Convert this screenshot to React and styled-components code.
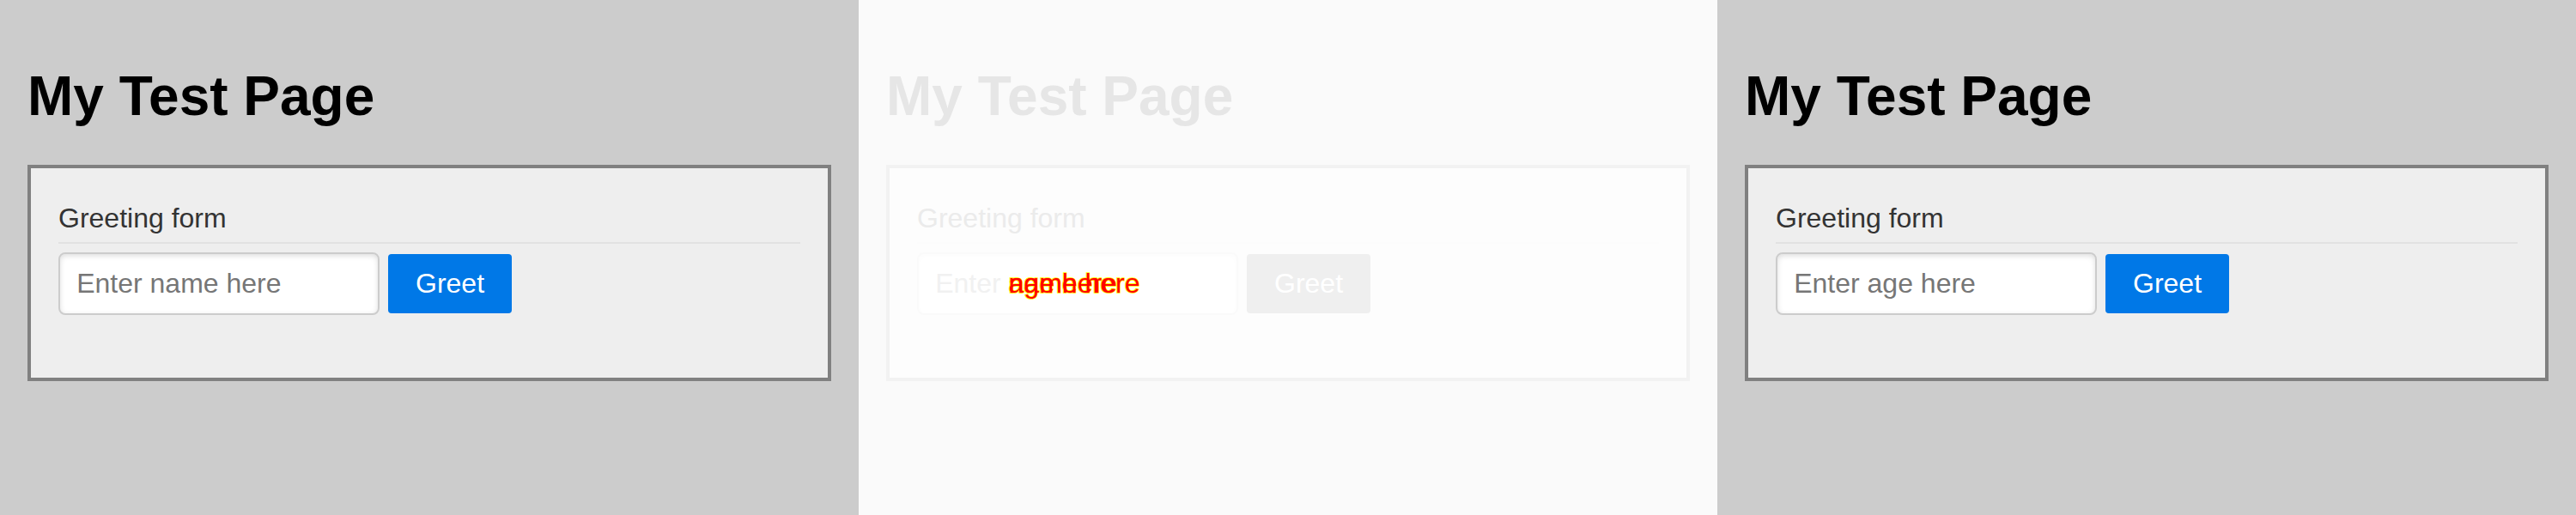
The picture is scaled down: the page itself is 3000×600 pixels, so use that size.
import React from "react";
import styled, { createGlobalStyle } from "styled-components";

const GlobalStyle = createGlobalStyle`
  html, body {
    margin: 0;
    padding: 0;
    background: #fff;
  }
  body {
    font-family: "Liberation Sans", Arial, sans-serif;
  }
`;

// normal page colours, and the same page washed out as a diff backdrop
const palettes = {
  normal: {
    page: "#cccccc",
    heading: "#000000",
    boxBorder: "#808080",
    boxBg: "#eeeeee",
    legend: "#333333",
    rule: "#e2e2e2",
    inputBg: "#ffffff",
    inputBorder: "#cccccc",
    inputShadow: "#dddddd",
    placeholder: "#767676",
    button: "#0078e7",
    buttonText: "#ffffff",
  },
  diff: {
    page: "#fafafa",
    heading: "#e6e6e6",
    boxBorder: "#f2f2f2",
    boxBg: "#fdfdfd",
    legend: "#ebebeb",
    rule: "#fcfcfc",
    inputBg: "#ffffff",
    inputBorder: "#fafafa",
    inputShadow: "#fcfcfc",
    placeholder: "#f1f1f1",
    button: "#efefef",
    buttonText: "#ffffff",
  },
};

const Screen = styled.div`
  display: flex;
  width: 3000px;
  height: 600px;
`;

const Panel = styled.section`
  width: 1000px;
  height: 600px;
  box-sizing: border-box;
  padding: 32px 32px 0;
  background: ${(p) => palettes[p.$variant].page};
  display: flow-root;
`;

const Title = styled.h1`
  margin: 43px 0;
  font-size: 64px;
  font-weight: 700;
  line-height: normal;
  color: ${(p) => palettes[p.$variant].heading};
`;

const FormBox = styled.div`
  border: 4px solid ${(p) => palettes[p.$variant].boxBorder};
  background: ${(p) => palettes[p.$variant].boxBg};
  padding: 30px 32px 73px;
`;

const Legend = styled.div`
  font-size: 32px;
  line-height: normal;
  padding: 9.6px 0;
  margin-bottom: 9.6px;
  color: ${(p) => palettes[p.$variant].legend};
  border-bottom: 2px solid ${(p) => palettes[p.$variant].rule};
`;

const Row = styled.div`
  display: flex;
  align-items: center;
  gap: 10px;
`;

const FieldWrap = styled.div`
  position: relative;
  width: 374px;
`;

const Input = styled.input`
  display: block;
  width: 100%;
  box-sizing: border-box;
  padding: 16px 19.2px;
  font-family: "Liberation Sans", Arial, sans-serif;
  font-size: 32px;
  line-height: normal;
  background: ${(p) => palettes[p.$variant].inputBg};
  border: 2px solid ${(p) => palettes[p.$variant].inputBorder};
  border-radius: 8px;
  box-shadow: inset 0 2px 6px ${(p) => palettes[p.$variant].inputShadow};
  outline: none;

  &::placeholder {
    color: ${(p) => palettes[p.$variant].placeholder};
    opacity: 1;
  }
`;

// placeholder text of the diff panel, drawn over the empty input
const PlaceholderOverlay = styled.div`
  position: absolute;
  left: 21.2px;
  top: 18px;
  font-size: 32px;
  line-height: normal;
  white-space: pre;
  pointer-events: none;
  color: ${palettes.diff.placeholder};
`;

const DiffStack = styled.span`
  display: inline-grid;
  vertical-align: top;
`;

const DiffLayer = styled.span`
  grid-area: 1 / 1;
  white-space: pre;
  color: ${(p) => (p.$stroke ? "#ffff00" : "#ff0000")};
  -webkit-text-stroke: ${(p) => (p.$stroke ? "1.6px #ffff00" : "0")};
`;

const Button = styled.button`
  border: none;
  border-radius: 4px;
  padding: 16px 32px;
  font-family: "Liberation Sans", Arial, sans-serif;
  font-size: 32px;
  line-height: normal;
  background: ${(p) => palettes[p.$variant].button};
  color: ${(p) => palettes[p.$variant].buttonText};
  cursor: pointer;
`;

const GreetingPage = ({ variant, placeholder, diffWords }) => (
  <Panel $variant={variant}>
    <Title $variant={variant}>My Test Page</Title>
    <FormBox $variant={variant}>
      <Legend $variant={variant}>Greeting form</Legend>
      <Row>
        <FieldWrap>
          <Input
            $variant={variant}
            type="text"
            placeholder={diffWords ? "" : placeholder}
          />
          {diffWords && (
            <PlaceholderOverlay>
              {"Enter "}
              <DiffStack>
                {diffWords.map((w) => (
                  <DiffLayer $stroke key={"s" + w}>
                    {w}
                  </DiffLayer>
                ))}
                {diffWords.map((w) => (
                  <DiffLayer key={"f" + w}>{w}</DiffLayer>
                ))}
              </DiffStack>
            </PlaceholderOverlay>
          )}
        </FieldWrap>
        <Button $variant={variant}>Greet</Button>
      </Row>
    </FormBox>
  </Panel>
);

const App = () => (
  <>
    <GlobalStyle />
    <Screen>
      <GreetingPage variant="normal" placeholder="Enter name here" />
      <GreetingPage variant="diff" diffWords={["name here", "age here"]} />
      <GreetingPage variant="normal" placeholder="Enter age here" />
    </Screen>
  </>
);

export default App;
